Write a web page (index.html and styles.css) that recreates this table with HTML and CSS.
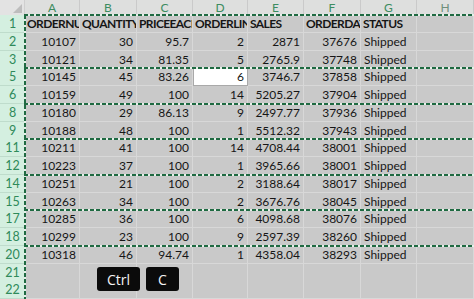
FILE: index.html
```html
<!DOCTYPE html>
<html>
<head>
<meta charset="utf-8">
<link rel="stylesheet" href="styles.css">
</head>
<body>
<div class="sheet">
  <div class="row hdr">
    <div class="corner"><span class="tri"></span></div>
    <div class="ch">A</div><div class="ch">B</div><div class="ch">C</div><div class="ch">D</div><div class="ch">E</div><div class="ch">F</div><div class="ch">G</div><div class="ch">H</div>
  </div>
  <div class="row seg bold">
    <div class="rh">1</div>
    <div class="c">ORDERNUMBER</div><div class="c">QUANTITYORDERED</div><div class="c">PRICEEACH</div><div class="c">ORDERLINENUMBER</div><div class="c">SALES</div><div class="c">ORDERDATE</div><div class="c">STATUS</div><div class="c"></div>
  </div>
  <div class="row">
    <div class="rh">2</div>
    <div class="c n">10107</div><div class="c n">30</div><div class="c n">95.7</div><div class="c n">2</div><div class="c n">2871</div><div class="c n">37676</div><div class="c">Shipped</div><div class="c"></div>
  </div>
  <div class="row">
    <div class="rh">3</div>
    <div class="c n">10121</div><div class="c n">34</div><div class="c n">81.35</div><div class="c n">5</div><div class="c n">2765.9</div><div class="c n">37748</div><div class="c">Shipped</div><div class="c"></div>
  </div>
  <div class="row seg">
    <div class="rh">5</div>
    <div class="c n">10145</div><div class="c n">45</div><div class="c n">83.26</div><div class="c n active">6</div><div class="c n">3746.7</div><div class="c n">37858</div><div class="c">Shipped</div><div class="c"></div>
  </div>
  <div class="row">
    <div class="rh">6</div>
    <div class="c n">10159</div><div class="c n">49</div><div class="c n">100</div><div class="c n">14</div><div class="c n">5205.27</div><div class="c n">37904</div><div class="c">Shipped</div><div class="c"></div>
  </div>
  <div class="row seg">
    <div class="rh">8</div>
    <div class="c n">10180</div><div class="c n">29</div><div class="c n">86.13</div><div class="c n">9</div><div class="c n">2497.77</div><div class="c n">37936</div><div class="c">Shipped</div><div class="c"></div>
  </div>
  <div class="row">
    <div class="rh">9</div>
    <div class="c n">10188</div><div class="c n">48</div><div class="c n">100</div><div class="c n">1</div><div class="c n">5512.32</div><div class="c n">37943</div><div class="c">Shipped</div><div class="c"></div>
  </div>
  <div class="row seg">
    <div class="rh">11</div>
    <div class="c n">10211</div><div class="c n">41</div><div class="c n">100</div><div class="c n">14</div><div class="c n">4708.44</div><div class="c n">38001</div><div class="c">Shipped</div><div class="c"></div>
  </div>
  <div class="row">
    <div class="rh">12</div>
    <div class="c n">10223</div><div class="c n">37</div><div class="c n">100</div><div class="c n">1</div><div class="c n">3965.66</div><div class="c n">38001</div><div class="c">Shipped</div><div class="c"></div>
  </div>
  <div class="row seg">
    <div class="rh">14</div>
    <div class="c n">10251</div><div class="c n">21</div><div class="c n">100</div><div class="c n">2</div><div class="c n">3188.64</div><div class="c n">38017</div><div class="c">Shipped</div><div class="c"></div>
  </div>
  <div class="row">
    <div class="rh">15</div>
    <div class="c n">10263</div><div class="c n">34</div><div class="c n">100</div><div class="c n">2</div><div class="c n">3676.76</div><div class="c n">38045</div><div class="c">Shipped</div><div class="c"></div>
  </div>
  <div class="row seg">
    <div class="rh">17</div>
    <div class="c n">10285</div><div class="c n">36</div><div class="c n">100</div><div class="c n">6</div><div class="c n">4098.68</div><div class="c n">38076</div><div class="c">Shipped</div><div class="c"></div>
  </div>
  <div class="row">
    <div class="rh">18</div>
    <div class="c n">10299</div><div class="c n">23</div><div class="c n">100</div><div class="c n">9</div><div class="c n">2597.39</div><div class="c n">38260</div><div class="c">Shipped</div><div class="c"></div>
  </div>
  <div class="row seg">
    <div class="rh">20</div>
    <div class="c n">10318</div><div class="c n">46</div><div class="c n">94.74</div><div class="c n">1</div><div class="c n">4358.04</div><div class="c n">38293</div><div class="c">Shipped</div><div class="c"></div>
  </div>
  <div class="row">
    <div class="rh">21</div>
    <div class="c"></div><div class="c"></div><div class="c"></div><div class="c"></div><div class="c"></div><div class="c"></div><div class="c"></div><div class="c"></div>
  </div>
  <div class="row">
    <div class="rh">22</div>
    <div class="c"></div><div class="c"></div><div class="c"></div><div class="c"></div><div class="c"></div><div class="c"></div><div class="c"></div><div class="c"></div>
  </div>

  <div class="keys">
    <span class="key key-ctrl">Ctrl</span>
    <span class="key key-c">C</span>
  </div>
</div>
</body>
</html>
```

FILE: styles.css
```css
html, body {
  margin: 0;
  padding: 0;
  width: 474px;
  height: 299px;
  overflow: hidden;
  background: #c9c9c9;
}

.sheet {
  position: relative;
  width: 474px;
  height: 299px;
  font-family: Lato, "Open Sans", sans-serif;
  font-size: 12px;
  color: #161616;
}

/* marching ants on the left of the copied block */
.sheet::before {
  content: "";
  position: absolute;
  left: 24px;
  top: 15px;
  bottom: 0;
  width: 2px;
  z-index: 3;
  background: repeating-linear-gradient(180deg, #1f6a42 0 4px, #e6efe9 4px 6px);
}

.row {
  position: relative;
  display: grid;
  grid-template-columns: 25px 55px 57px 56px 55px 56px 57px 56px 57px;
  height: 17.75px;
}

.row.hdr {
  height: 15px;
}

.row.seg::after {
  content: "";
  position: absolute;
  left: 24px;
  right: 0;
  top: -1px;
  height: 2px;
  z-index: 3;
  background: repeating-linear-gradient(90deg, #1f6a42 0 4px, #e6efe9 4px 6px);
}

.corner {
  position: relative;
  background: #e3e3e3;
  border-right: 1px solid #cfcfcf;
  box-sizing: border-box;
}

.tri {
  position: absolute;
  right: 2px;
  bottom: 2px;
  width: 0;
  height: 0;
  border-left: 9px solid transparent;
  border-bottom: 9px solid #bdbdbd;
}

.ch {
  background: #dedfde;
  color: #3c8c60;
  font-size: 12px;
  line-height: 15px;
  text-align: center;
  border-right: 1px solid #cacaca;
  box-sizing: border-box;
}

.ch:last-child {
  color: #6f8f7c;
}

.rh {
  background: #d4efe0;
  color: #2f8a5a;
  font-size: 12.5px;
  text-align: center;
  line-height: 17px;
  border-bottom: 1px solid #bfdccc;
  box-sizing: border-box;
}

.c {
  box-sizing: border-box;
  background: #c9c9c9;
  border-right: 1px solid #d8d8d8;
  border-bottom: 1px solid #d8d8d8;
  padding: 0 3px 0 3px;
  line-height: 17px;
  white-space: nowrap;
  overflow: hidden;
  text-overflow: clip;
}

.c.n {
  text-align: right;
}

.bold .c {
  font-weight: bold;
  padding-left: 2px;
  letter-spacing: -0.6px;
}

.c.active {
  background: #ffffff;
  border: 1px solid #a9a9a9;
  line-height: 15px;
}

.keys {
  position: absolute;
  left: 97px;
  top: 267px;
  display: flex;
  gap: 6px;
  z-index: 4;
}

.key {
  display: flex;
  align-items: center;
  justify-content: center;
  height: 24px;
  background: #0b0b0b;
  color: #f4f4f4;
  border-radius: 3px;
  font-family: "Open Sans", sans-serif;
  font-size: 14px;
}

.key-ctrl {
  width: 43px;
}

.key-c {
  width: 33px;
}
```
